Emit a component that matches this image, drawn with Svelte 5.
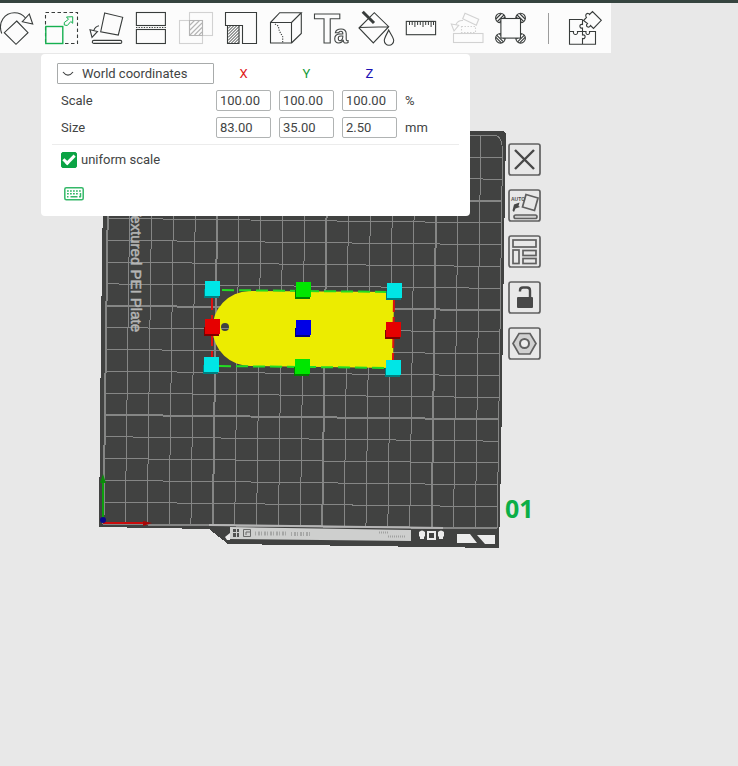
<script lang="ts">
  type Point = [number, number];

  let coordinates = $state('world');
  let uniform = $state(true);
  let scale = $state(['100.00', '100.00', '100.00']);
  let size = $state(['83.00', '35.00', '2.50']);
  let activeTool = $state('Scale');

  const axes = ['X', 'Y', 'Z'];
  const tools = [
    'Rotate', 'Scale', 'Lay on face', 'Cut', 'Mesh boolean', 'Support painting', 'Seam painting',
    'Text', 'Color painting', 'Measure', 'Assemble', 'Brim ears'
  ];
  const disabledTools = ['Mesh boolean', 'Assemble'];
  const plateActions = ['Remove plate', 'Auto orient', 'Arrange', 'Lock plate', 'Plate settings'];

  // Bed grid: 18 x 18 cells, seen slightly skewed from above
  const CELLS = 18;
  const cells = Array.from({ length: CELLS + 1 }, (_, i) => i);

  function bed(u: number, v: number): Point {
    return [103.4 + u * 21.88 + v * 0.305, 524 + u * 0.25 - v * 21.83];
  }

  function line(a: Point, b: Point) {
    return `M${a.join(' ')}L${b.join(' ')}`;
  }

  const handles = [
    { x: 205, y: 281, kind: 'corner' },
    { x: 387, y: 283, kind: 'corner' },
    { x: 204, y: 357, kind: 'corner' },
    { x: 386, y: 360, kind: 'corner' },
    { x: 296, y: 282, kind: 'y' },
    { x: 295, y: 359, kind: 'y' },
    { x: 205, y: 319, kind: 'x' },
    { x: 386, y: 322, kind: 'x' },
    { x: 296, y: 320, kind: 'z' }
  ];
</script>

<main class="editor">
  <svg class="scene" aria-label="Build plate">
    <path class="plate" d="M104 129 L502 131 Q506 131 506 135 L505 187 L504 249 L501 463 L499 548 L228 544 L209 529 L99 527 L101 330 Z" />

    <g class="grid">
      {#each cells as i}
        <path class:major={i % 5 === 0} d={line(bed(i, 0), bed(i, i === CELLS ? 17.5 : CELLS))} />
        <path class:major={i % 5 === 0} d={line(bed(0, i), bed(i === CELLS ? 17.6 : CELLS, i))} />
      {/each}
      <path d="M494 135 Q501 136 502 145" />
    </g>

    <text class="plate-name" transform="translate(131 332) rotate(90)">Textured PEI Plate</text>

    <g class="bezel">
      <path class="bezel-edge" d="M209 525 L443 528" />
      <path class="bezel-strip" d="M230 527 L411 530 V541 L230 539 Z" />
      <path class="bezel-white" d="M225 537 l5 -4 v7 h-3 z" />
      <path class="bezel-mark" d="M233 529h3v3h-3z M237 529h2v3h-2z M233 533h3v4h-3z M237 533h2v4h-2z" />
      <path class="bezel-line" d="M243.500 529.500 h7 v7 h-7 z M246 532 h4 M246 532 v3" />
      <path class="bezel-print" d="M255 533.500 H286 M291 534 H310" />
      <path class="bezel-fine" d="M379 532.500 h10 M388 536.500 h17" />
      <path class="bezel-white" d="M419 532 q3 -3 6 0 v4 l-1 1 v2 h-4 v-2 l-1 -1 z M438 532 q3 -3 6 0 v4 l-1 1 v2 h-4 v-2 l-1 -1 z" />
      <rect class="bezel-box" x="428" y="532" width="7" height="7" />
      <path class="bezel-white" d="M457 534 H470 L477 543 H457 Z M477 535 H495 V544 H485 Z" />
    </g>

    <path class="axis-y" d="M103 520 V482" />
    <path class="axis-y-tip" d="M100 483 L103 474 L106 483 Z" />
    <path class="axis-x" d="M103 523 H144" />
    <path class="axis-x-tip" d="M143 521 L152 523 L143 526 Z" />
    <circle class="axis-z" cx="103" cy="520" r="3" />

    <path class="model" d="M249 291 L394 292 L393 368 L251 366 A37 37 0 0 1 249 291 Z" />
    <circle class="hole" cx="225" cy="327" r="4" />
    <path class="hole-line" d="M221 328.500 H229" />

    <path class="bound-y" d="M222 290 L394 292 M219 366 L394 368" />
    <path class="bound-x" d="M212 297 L212 357 M394 299 L393 360" />

    {#each handles as handle}
      <g class="handle handle--{handle.kind}">
        <rect class="handle__side" x={handle.x - 1} y={handle.y + 8} width="15" height="9" />
        <rect class="handle__face" x={handle.x} y={handle.y} width="15" height="15" />
      </g>
    {/each}

    <text class="plate-number" x="505" y="518">01</text>
  </svg>

  <header class="titlebar"></header>

  <nav class="toolbar" aria-label="Tools">
    {#each tools as tool}
      <button
        class="tool"
        type="button"
        aria-label={tool}
        aria-pressed={activeTool === tool}
        disabled={disabledTools.includes(tool)}
        onclick={() => (activeTool = tool)}
      >
        <svg viewBox="0 0 34 34" width="34" height="34" aria-hidden="true">
          {#if tool === 'Rotate'}
            <path d="M16.700 10 L28 21.700 L16 33.300 L4.300 21.700 Z" />
            <path d="M1.700 22.500 C-2.500 11 5 1.700 14.500 1.700 C19 1.700 23 4 25.500 7" />
            <path d="M29.300 3 L22.300 10.700 L32.700 13 Z" />
          {:else if tool === 'Scale'}
            <rect x=".5" y="1.500" width="32" height="31" stroke-dasharray="3.500 2.500" />
            <rect class="accent" x=".8" y="15.500" width="17" height="17" />
            <path class="accent thin" d="M21.500 6 L27.700 5.700 V12.300 L25.800 10.500 L22.300 14.500 L19.300 14 V11.500 L23.500 8.300 Z" />
          {:else if tool === 'Lay on face'}
            <path d="M14.700 2 L32.700 6.300 L28.300 24 L10.700 20.700 Z" />
            <path d="M9 14.700 Q5 15.500 3.800 19.500 M0 18.700 L7.500 20.500 L2 26.300 Z" />
            <rect x="2.300" y="29.400" width="29.500" height="3" rx="1.500" />
          {:else if tool === 'Cut'}
            <rect x="1.400" y="1.500" width="29" height="13" />
            <rect x="1.400" y="18.500" width="29" height="14" />
            <path d="M1 16.500 H31" stroke-dasharray="1.300 1.300" />
          {:else if tool === 'Mesh boolean'}
            <rect x="9.500" y="1.500" width="23" height="23" />
            <rect x="-.5" y="9.500" width="23" height="23" />
            <path class="shade" d="M9.500 9.500 H22.500 V24.500 H9.500 Z M10 14 L14.500 9.500 M10 19 L19.500 9.500 M10 24 L22 12 M14.500 24 L22 16.500 M19 24 L22 21" />
          {:else if tool === 'Support painting'}
            <path d="M.5 1.500 H31.500 V32.500 H17.500 V14.500 H.5 Z" />
            <path d="M2.500 14.500 V32.500 H14 V14.500" />
            <path class="thin" d="M3 17.500 L6 14.500 M3 20.500 L9 14.500 M3 23.500 L12 14.500 M3 26.500 L14 15.500 M3 29.500 L14 18.500 M3 32.500 L14 21.500 M6 32.500 L14 24.500 M9 32.500 L14 27.500 M12 32.500 L14 30.500" />
          {:else if tool === 'Seam painting'}
            <path d="M.5 11.500 H21.500 V32 H.5 Z L9.700 1.700 H31.300 L21.500 11.500 M31.300 1.700 V22.500 L21.500 32" />
            <path d="M5 13 L8.300 15 L9.300 20 L12.700 25.700 V31.700" stroke-dasharray="1.200 1.300" />
          {:else if tool === 'Text'}
            <text class="glyph" x="-1" y="32" font-size="43">T<tspan x="19" font-size="25">a</tspan></text>
          {:else if tool === 'Color painting'}
            <path d="M-1 17 L14.300 1.700 L28.700 15.700 L13.300 32 Z M-1 16.500 L28.700 15.700" />
            <path class="thick" d="M2.700 .8 L14 12" />
            <path d="M28.700 19 C27 23 24.300 26.500 24.300 29.600 A4.700 4.700 0 0 0 33.700 29.600 C33.700 26.500 30.500 23 28.700 19 Z" />
          {:else if tool === 'Measure'}
            <rect x="1.300" y="10.400" width="29.300" height="13.300" />
            <path class="thin" d="M4.500 10.500 v3.500 M7.200 10.500 v3.500 M9.900 10.500 v5.500 M12.600 10.500 v3.500 M15.300 10.500 v3.500 M18 10.500 v5.500 M20.700 10.500 v3.500 M23.400 10.500 v3.500 M26.100 10.500 v5.500 M28.500 10.500 v3.500" />
          {:else if tool === 'Assemble'}
            <rect x="3.500" y="22.500" width="29.500" height="9" />
            <rect x="11.500" y="15.500" width="14" height="6" stroke-dasharray="1.500 1.500" />
            <path d="M15 2.300 L28.700 8.300 L26.300 14.300 L12.700 7.700 Z M13 9.500 Q8 9 6 13.500 M1.300 13 L8.700 14.300 L4 20 Z" />
          {:else}
            {#each [[5.4, 7], [25.6, 7], [5.4, 27.3], [25.6, 27.3]] as [cx, cy], i}
              <circle {cx} {cy} r="4.800" />
              {#if i === 0 || i === 3}
                <path d="M{cx - 4.5} {cy + 1} L{cx + 1} {cy - 4.5} M{cx - 3} {cy + 3.5} L{cx + 3.5} {cy - 3} M{cx - 1} {cy + 4.5} L{cx + 4.5} {cy - 1}" />
              {:else}
                <path d="M{cx - 1} {cy - 4.5} L{cx + 4.5} {cy + 1} M{cx - 3.5} {cy - 3} L{cx + 3} {cy + 3.5} M{cx - 4.5} {cy - 1} L{cx + 1} {cy + 4.5}" />
              {/if}
            {/each}
            <rect class="solid" x="5.900" y="7.500" width="19.600" height="19.600" />
          {/if}
        </svg>
      </button>
    {/each}
    <span class="toolbar__rule"></span>
    <button class="tool" type="button" aria-label="Assembly view">
      <svg viewBox="0 0 34 34" width="34" height="34" aria-hidden="true">
        <path d="M14.500 8.500 H1.500 V33.300 H27.500 V20.500 H21.500 C22.500 24.500 17 24.500 18 20.500 H14.500 V24 C18 23 18 28.500 14.500 27.500 V33.300" />
        <path d="M1.500 20.500 H5.500 C4.500 24.500 10.500 24.500 9.500 20.500 H14.500 V17 C11 18 11 12.500 14.500 13.500 V8.500" />
        <path d="M15.500 9.500 L18.500 6.500 C16 3 20.500 1 21.500 3.500 L24.500 .5 L33.300 9.300 L25.500 17.500 L22.500 14.500 C21 18 16.500 15 19.500 12.500 Z" />
      </svg>
    </button>
  </nav>

  <section class="panel" aria-label="Scale">
    <div class="fields">
      <div class="picker">
        <select class="picker__select" aria-label="Coordinate system" bind:value={coordinates}>
          <option value="world">World coordinates</option>
          <option value="object">Object coordinates</option>
        </select>
        <svg class="picker__chevron" viewBox="0 0 12 6" width="12" height="6" aria-hidden="true">
          <path d="M1 1 Q3.500 4.200 6 4.200 Q8.500 4.200 11 1" />
        </svg>
      </div>
      {#each axes as axis}
        <span class="axis axis--{axis.toLowerCase()}">{axis}</span>
      {/each}
      <span></span>

      <span class="label">Scale</span>
      {#each axes as axis, i}
        <input class="number" type="text" aria-label="Scale {axis}" bind:value={scale[i]} />
      {/each}
      <span class="unit">%</span>

      <span class="label">Size</span>
      {#each axes as axis, i}
        <input class="number" type="text" aria-label="Size {axis}" bind:value={size[i]} />
      {/each}
      <span class="unit">mm</span>
    </div>

    <hr class="separator" />

    <label class="check">
      <input class="check__box" type="checkbox" bind:checked={uniform} />
      <span>uniform scale</span>
    </label>

    <button class="shortcuts" type="button" aria-label="Keyboard shortcuts">
      <svg viewBox="0 0 20 14" width="20" height="14" aria-hidden="true">
        <rect x=".8" y=".8" width="18.400" height="12" rx="1.500" />
        <path d="M3 4 H17.500 M3 6.800 H14" stroke-dasharray="1.800 1.200" />
        <path d="M3 9.800 h1.500 M6.500 9.800 h7 M15 9.800 h2 M16.500 6 v4" />
      </svg>
    </button>
  </section>

  <div class="plate-actions">
    {#each plateActions as action, i}
      <button class="plate-action" type="button" aria-label={action}>
        <svg viewBox="0 0 33 33" width="33" height="33" aria-hidden="true">
          <rect x="1" y="1" width="31" height="31" rx="2" />
          {#if i === 0}
            <path class="bold" d="M7 7 L26 26 M26 7 L7 26" />
          {:else if i === 1}
            <path d="M18 5.500 L30 9 L26.500 21.500 L14.500 18 Z" />
            <rect class="filled" x="6" y="26" width="23" height="3.500" rx="1.700" />
            <path class="dark" d="M4.500 21.500 L6 15.500 L11.500 13.500 L10.500 17 L12 18 L7.500 19.500 L6 23 Z" />
            <text class="auto" x="3" y="12">AUTO</text>
          {:else if i === 2}
            <rect x="5" y="5" width="23" height="7" />
            <rect x="5" y="15" width="6" height="13.500" />
            <rect x="15" y="15.500" width="13" height="5" />
            <rect x="15" y="23.500" width="13" height="5" />
          {:else if i === 3}
            <path class="bold" d="M12 10.500 V9.500 Q12 6.500 15 6.500 H19 Q22 6.500 22 9.500 V16" />
            <rect class="dark" x="9" y="16" width="16" height="11" rx="1" />
          {:else}
            <path class="filled" d="M11 6.500 H22 L28 16.500 L22 27 H11 L5 16.500 Z" />
            <circle class="ring" cx="16.500" cy="16.500" r="4.500" />
          {/if}
        </svg>
      </button>
    {/each}
  </div>
</main>

<style>
  :global(body) {
    background: #e8e8e8;
  }

  .editor {
    position: relative;
    min-height: 100vh;
    overflow: hidden;
    color: #424444;
    font-family: Roboto, sans-serif;
    font-size: 13px;
    line-height: 21px;
  }

  /* 3D viewport, behind the floating controls */
  .scene {
    position: absolute;
    inset: 0;
    width: 100%;
    height: 100%;
  }

  .plate {
    fill: #414241;
    shape-rendering: crispEdges;
  }

  .grid path {
    fill: none;
    stroke: #858685;
    stroke-width: 1;
    shape-rendering: crispEdges;
  }

  .grid .major {
    stroke-width: 2;
  }

  .plate-name {
    fill: #b4b5b4;
    font-family: "Liberation Sans", sans-serif;
    font-size: 15px;
    text-anchor: end;
    stroke: #b4b5b4;
    stroke-width: 0.5;
  }

  .bezel-edge {
    stroke: #b5b5b5;
    stroke-width: 2;
  }

  .bezel-strip {
    fill: #cecfce;
  }

  .bezel-white {
    fill: #ececec;
  }

  .bezel-mark {
    fill: #505150;
  }

  .bezel-line {
    fill: none;
    stroke: #6a6b6a;
  }

  .bezel-print {
    fill: none;
    stroke: #a6a7a6;
    stroke-width: 4;
    stroke-dasharray: 1 2 2 1;
  }

  .bezel-fine {
    fill: none;
    stroke: #a0a1a0;
    stroke-width: 2;
    stroke-dasharray: 1 1;
  }

  .bezel-box {
    fill: none;
    stroke: #ececec;
    stroke-width: 2;
  }

  .axis-y {
    stroke: #0ca00c;
    stroke-width: 2;
  }

  .axis-y-tip {
    fill: #0a8a0a;
  }

  .axis-x {
    stroke: #c80c0c;
    stroke-width: 2;
  }

  .axis-x-tip {
    fill: #a80808;
  }

  .axis-z {
    fill: #08088c;
  }

  .model {
    fill: #ecec00;
  }

  .hole {
    fill: #414241;
  }

  .hole-line {
    stroke: #858685;
  }

  .bound-y {
    stroke: #22dc22;
    stroke-width: 2;
    stroke-dasharray: 12 5;
  }

  .bound-x {
    stroke: #dc1010;
    stroke-width: 2;
    stroke-dasharray: 13 5;
  }

  .handle--corner {
    fill: #00e6e6;
  }

  .handle--x {
    fill: #e60000;
  }

  .handle--y {
    fill: #00e600;
  }

  .handle--z {
    fill: #0000e6;
  }

  .handle__side {
    filter: brightness(0.55);
  }

  .plate-number {
    fill: #0cae46;
    font-family: "Noto Sans", sans-serif;
    font-size: 25px;
    font-weight: 700;
  }

  .titlebar {
    position: relative;
    height: 3px;
    background: #35443f;
  }

  .toolbar {
    position: relative;
    display: flex;
    align-items: center;
    gap: 11px;
    width: fit-content;
    height: 50px;
    padding-right: 9px;
    background: #fcfcfc;
  }

  button {
    display: block;
    padding: 0;
    border: none;
    background: none;
    cursor: pointer;
  }

  button svg {
    display: block;
    overflow: visible;
  }

  .tool {
    flex-shrink: 0;
  }

  .tool svg {
    fill: none;
    stroke: #383c3b;
    stroke-width: 1.1;
  }

  .tool:disabled svg {
    stroke: #d2d2d2;
  }

  .tool .shade {
    stroke: #b4b4b4;
  }

  .tool .accent {
    stroke: #16b050;
    stroke-width: 1.4;
  }

  .tool .thin {
    stroke-width: 1;
  }

  .tool .thick {
    stroke-width: 3;
  }

  .tool .solid {
    fill: #fcfcfc;
  }

  .tool .glyph {
    font-family: "Liberation Sans", sans-serif;
    font-weight: 700;
    opacity: 0.95;
  }

  .toolbar__rule {
    width: 1px;
    height: 31px;
    margin: 0 8px;
    background: #9c9c9c;
  }

  .panel {
    position: relative;
    box-sizing: border-box;
    width: fit-content;
    margin: 1px 0 0 41px;
    padding: 9px 11px 15px;
    border-radius: 4px;
    background: #fff;
  }

  .fields {
    display: grid;
    grid-template-columns: 159px 63px 63px 63px 49px;
    row-gap: 6px;
    padding: 0 5px;
  }

  .picker {
    display: grid;
    align-items: center;
    width: 157px;
  }

  .picker__select,
  .picker__chevron {
    grid-area: 1 / 1;
  }

  .picker__select {
    box-sizing: border-box;
    width: 100%;
    height: 21px;
    padding: 0 0 0 24px;
    border: 1px solid #a8abab;
    border-radius: 1px;
    appearance: none;
    background: #fff;
    color: inherit;
    font: inherit;
    line-height: 19px;
  }

  .picker__chevron {
    margin-left: 5px;
    fill: none;
    stroke: #424444;
    stroke-width: 1.2;
    pointer-events: none;
  }

  .axis {
    width: 55px;
    text-align: center;
  }

  .axis--x {
    color: #e01818;
  }

  .axis--y {
    color: #169c3c;
  }

  .axis--z {
    color: #1c12b4;
  }

  .label {
    padding-left: 4px;
  }

  .number {
    box-sizing: border-box;
    width: 55px;
    height: 21px;
    padding: 0 3px;
    border: 1px solid #b0b3b3;
    border-radius: 2px;
    background: #fff;
    color: inherit;
    font: inherit;
  }

  .separator {
    height: 1px;
    margin: 6px 0 4px;
    border: none;
    background: #ececec;
  }

  .check {
    display: flex;
    align-items: center;
    gap: 4px;
    width: fit-content;
    padding-left: 9px;
  }

  .check__box {
    display: grid;
    place-items: center;
    width: 16px;
    height: 16px;
    margin: 0;
    border: 1px solid #0ba344;
    border-radius: 2px;
    box-sizing: border-box;
    appearance: none;
    background: #fff;
  }

  .check__box:checked {
    background: #0ba344;
  }

  .check__box:checked::after {
    content: "";
    width: 12px;
    height: 7px;
    margin-bottom: 3px;
    box-sizing: border-box;
    border: solid #fff;
    border-width: 0 0 3px 3px;
    transform: rotate(-45deg);
  }

  .shortcuts {
    margin: 17px 0 0 12px;
  }

  .shortcuts svg {
    fill: none;
    stroke: #34b868;
    stroke-width: 1.5;
  }

  /* Pinned to the right edge of the plate in the viewport */
  .plate-actions {
    position: absolute;
    top: 143px;
    left: 508px;
    display: flex;
    flex-direction: column;
    gap: 13px;
  }

  .plate-action svg {
    fill: none;
    stroke: #606060;
    stroke-width: 1.7;
  }

  .plate-action .bold {
    stroke-width: 2.4;
    stroke: #484848;
  }

  .plate-action .filled {
    fill: #d0d0d0;
  }

  .plate-action .ring {
    fill: #ececec;
    stroke-width: 2;
  }

  .plate-action .dark {
    fill: #484848;
    stroke: none;
  }

  .plate-action .auto {
    fill: #505050;
    stroke: none;
    font-size: 5px;
    font-weight: 700;
  }
</style>
